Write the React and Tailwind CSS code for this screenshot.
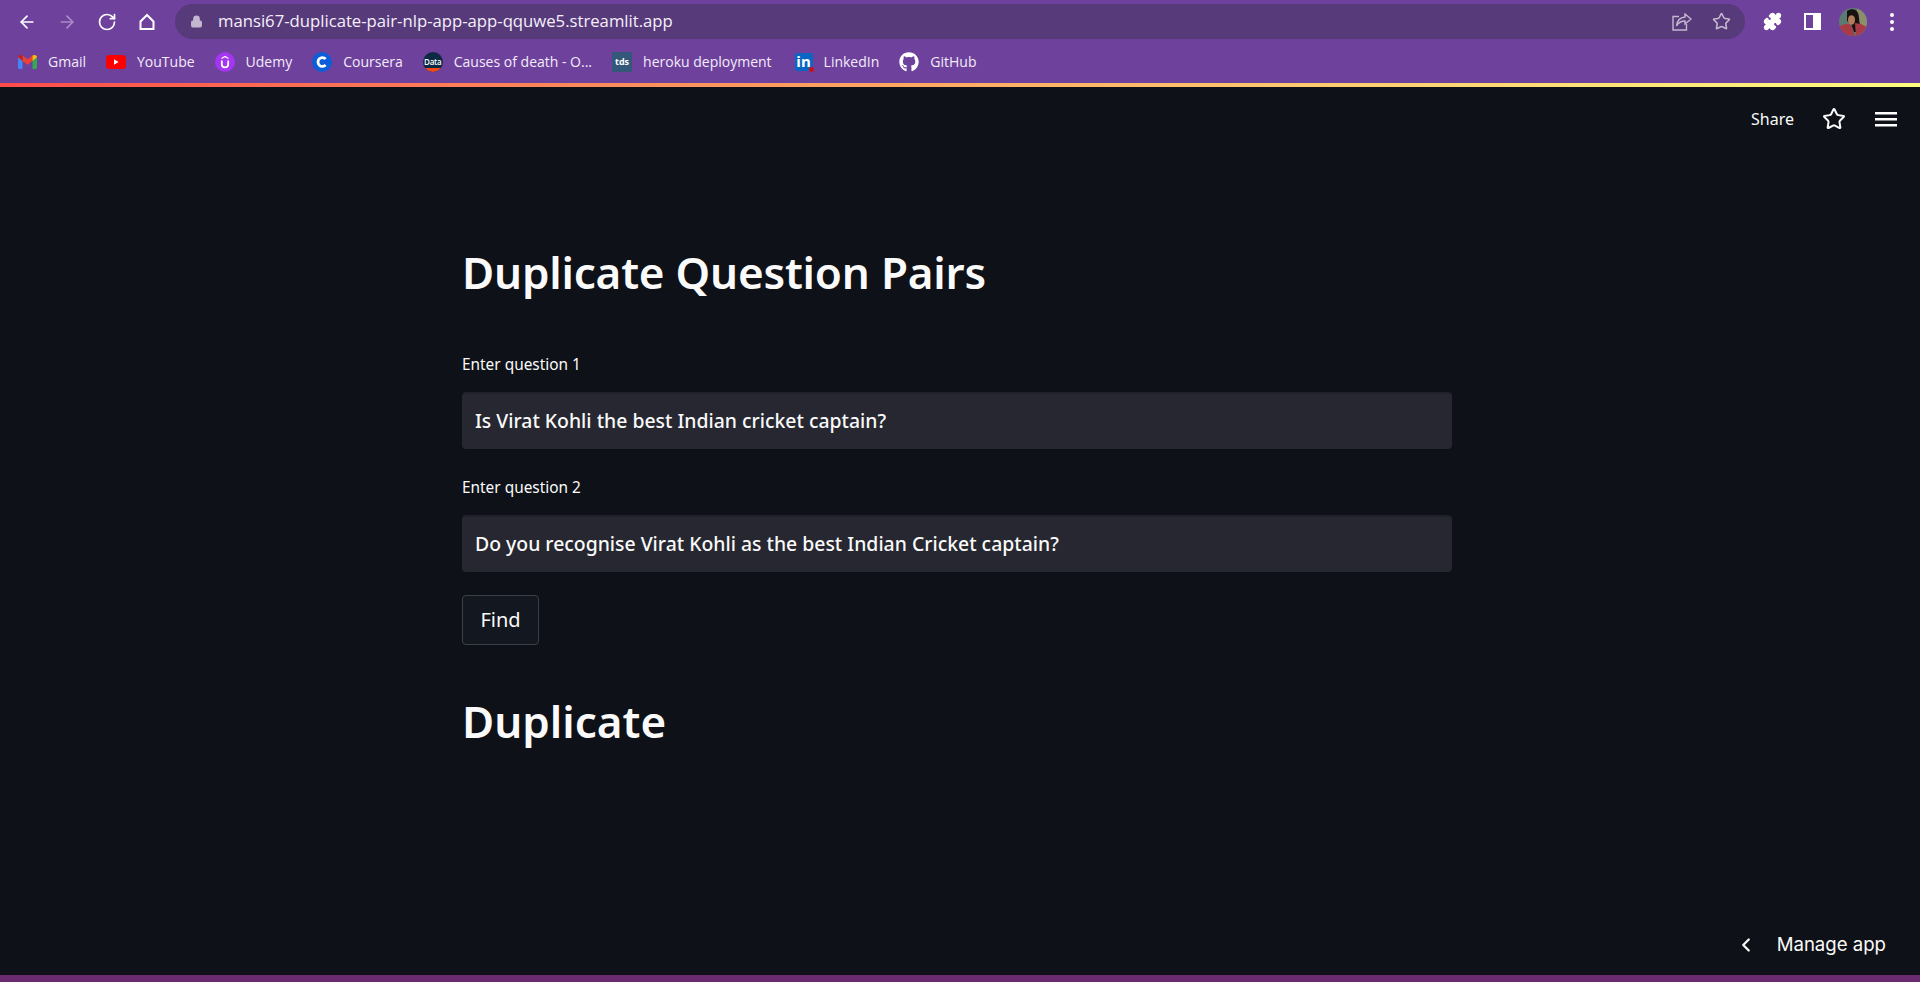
import { ArrowLeft, ArrowRight, RotateCw, Lock, Star, ChevronLeft, Puzzle } from 'lucide-react'
import { FaGithub } from 'react-icons/fa'

const chromeFont = 'font-["Open_Sans","Noto_Sans",sans-serif]'
const appFont = 'font-["Noto_Sans",sans-serif]'

function HomeIcon() {
  return (
    <svg width="20" height="20" viewBox="0 0 20 20" fill="none" stroke="#fff" strokeWidth="2" strokeLinejoin="miter">
      <path d="M10 3 3.500 9.500V17h13V9.500Z" />
    </svg>
  )
}

function MenuIcon() {
  return (
    <svg width="22" height="15" viewBox="0 0 22 15" fill="#fff" className="ml-[29px]">
      <rect width="22" height="2.500" />
      <rect y="6" width="22" height="2.500" />
      <rect y="12" width="22" height="2.500" />
    </svg>
  )
}

function GmailIcon() {
  return (
    <svg width="19" height="15" viewBox="0 0 19 15">
      <path d="M0 3v10.500A1.500 1.500 0 0 0 1.500 15H4.500V6.500Z" fill="#4285f4" />
      <path d="M19 3v10.500a1.500 1.500 0 0 1-1.500 1.500H14.500V6.500Z" fill="#34a853" />
      <path d="M4.500 7 9.500 10.800 14.500 7V1.500L9.500 5.200 4.500 1.500Z" fill="#ea4335" />
      <path d="M0 3.200 C0 1 2.800 .3 4.500 1.500V7Z" fill="#c5221f" />
      <path d="M19 3.200 C19 1 16.200 .3 14.500 1.500V7Z" fill="#fbbc04" />
    </svg>
  )
}

function YoutubeIcon() {
  return (
    <svg width="20" height="14" viewBox="0 0 20 14">
      <rect width="20" height="14" rx="3.500" fill="#f00" />
      <path d="M8 4.200v5.600l4.600-2.800Z" fill="#fff" />
    </svg>
  )
}

function UdemyIcon() {
  return (
    <svg width="20" height="20" viewBox="0 0 20 20">
      <circle cx="10" cy="10" r="10" fill="#a435f0" />
      <path d="M6.500 6.500 10 4.500l3.500 2" fill="none" stroke="#fff" strokeWidth="1.400" />
      <path d="M6.800 8.500v3.700a3.200 3.200 0 0 0 6.400 0V8.500" fill="none" stroke="#fff" strokeWidth="1.800" />
    </svg>
  )
}

function CourseraIcon() {
  return (
    <svg width="20" height="20" viewBox="0 0 20 20">
      <circle cx="10" cy="10" r="10" fill="#0b5ed7" />
      <path d="M13.600 7a4.400 4.400 0 1 0 0 6" fill="none" stroke="#fff" strokeWidth="2.800" />
    </svg>
  )
}

function DataIcon() {
  return (
    <div className="relative flex h-[20px] w-[20px] items-center justify-center overflow-hidden rounded-full bg-[#0d2a45]">
      <span className={`${chromeFont} text-[8px] font-semibold leading-none tracking-[-0.2px] text-white`}>Data</span>
      <span className="absolute bottom-0 left-0 h-[4px] w-full bg-[#f0491c]" />
    </div>
  )
}

function TdsIcon() {
  return (
    <div className="flex h-[20px] w-[20px] items-center justify-center bg-[#34587a]">
      <span className={`${chromeFont} text-[9px] font-bold leading-none text-white`}>tds</span>
    </div>
  )
}

function LinkedinIcon() {
  return (
    <div className="relative flex h-[18px] w-[18px] items-center justify-center rounded-[2px] bg-[#0a66c2]">
      <span className={`${chromeFont} text-[15px] font-bold leading-none text-white`}>in</span>
      <span className="absolute -bottom-[1px] -right-[1px] h-[5px] w-[5px] rounded-full bg-[#cc1016]" />
    </div>
  )
}

function ShareBoxIcon() {
  return (
    <svg width="20" height="18" viewBox="0 0 20 18" fill="none" stroke="#c3b8cf" strokeWidth="1.400">
      <path d="M7 3.500H1v13.500h13.500V11" />
      <path d="M13 1l6 5-6 5V8C9 8 6.500 9.500 4.500 13c.5-5 3.500-8.500 8.500-9Z" />
    </svg>
  )
}

function Avatar() {
  return (
    <svg width="28" height="28" viewBox="0 0 28 28">
      <clipPath id="av"><circle cx="14" cy="14" r="14" /></clipPath>
      <g clipPath="url(#av)">
        <rect width="28" height="28" fill="#5c7a72" />
        <rect x="18" width="10" height="28" fill="#8c8f6c" />
        <path d="M8 3c6-4 12-1 12 7 0 6 3 9 2 14H15l-3-8-4-3Z" fill="#1a1210" />
        <ellipse cx="12.500" cy="12" rx="3.500" ry="4.800" fill="#b67c5c" />
        <path d="M0 19c3-3 8-4 12-2l4 11H0Z" fill="#a93b46" />
        <path d="M16 15l6 1 6 3v9H17Z" fill="#a93b46" />
      </g>
    </svg>
  )
}

const bookmarks = [
  { label: 'Gmail', icon: <GmailIcon /> },
  { label: 'YouTube', icon: <YoutubeIcon /> },
  { label: 'Udemy', icon: <UdemyIcon /> },
  { label: 'Coursera', icon: <CourseraIcon /> },
  { label: 'Causes of death - O...', icon: <DataIcon /> },
  { label: 'heroku deployment', icon: <TdsIcon /> },
  { label: 'LinkedIn', icon: <LinkedinIcon />, extra: 'ml-[3px]' },
  { label: 'GitHub', icon: <FaGithub size={20} color="#fff" /> },
]

function TextField({ label, value }) {
  return (
    <div>
      <p className="mb-[17px] text-[15.400px] leading-[20px] text-[#fafafa]">{label}</p>
      <div className="flex h-[57px] items-center rounded-[4px] border-t-2 border-[#20212a] bg-[#262730] px-[13px] pb-[2px] text-[19.400px] font-medium text-[#fafafa]">
        {value}
      </div>
    </div>
  )
}

export default function App() {
  return (
    <div className="flex h-[982px] flex-col overflow-hidden bg-[#0e1117]">
      <div className={`${chromeFont} bg-[#6e419d] text-white`}>
        <div className="flex h-[42px] items-center pl-[17px] pt-[1px]">
          <div className="flex w-[158px] items-center gap-[20px]">
            <ArrowLeft size={20} strokeWidth={2} />
            <ArrowRight size={20} strokeWidth={2} className="text-[#a88cc6]" />
            <RotateCw size={20} strokeWidth={2} />
            <HomeIcon />
          </div>
          <div className="flex h-[35px] w-[1570px] items-center rounded-full bg-[#573a7a] pl-[15px] pr-[14px]">
            <Lock size={13} fill="#c3b8cf" stroke="#c3b8cf" />
            <span className="ml-[15px] flex-1 text-[16.700px] leading-none text-[#f5f0fa]">
              mansi67-duplicate-pair-nlp-app-app-qquwe5.streamlit.app
            </span>
            <ShareBoxIcon />
            <Star size={19} className="ml-[20px] text-[#c3b8cf]" />
          </div>
          <div className="ml-[18px] flex items-center">
            <Puzzle size={19} fill="#fff" />
            <div className="ml-[22px] flex h-[17px] w-[17px] justify-end border-2 border-white">
              <span className="h-full w-[6px] bg-white" />
            </div>
            <div className="ml-[18px]"><Avatar /></div>
            <div className="ml-[23px] flex flex-col gap-[3px]">
              <span className="h-[4px] w-[4px] rounded-full bg-white" />
              <span className="h-[4px] w-[4px] rounded-full bg-white" />
              <span className="h-[4px] w-[4px] rounded-full bg-white" />
            </div>
          </div>
        </div>
        <div className="flex h-[41px] items-center gap-[20px] pb-[2px] pl-[18px]">
          {bookmarks.map(b => (
            <div key={b.label} className={`flex items-center gap-[11px] ${b.extra || ''}`}>
              {b.icon}
              <span className="text-[14px] leading-none text-[#f3ecf9]">{b.label}</span>
            </div>
          ))}
        </div>
      </div>
      <div className="h-[4px] bg-gradient-to-r from-[#ff4b4b] to-[#fffd80]" />

      <main className={`${appFont} relative flex-1 text-[#fafafa]`}>
        <div className="flex h-[64px] items-center justify-end pr-[23px]">
          <span className="text-[16px]">Share</span>
          <Star size={24} strokeWidth={2} className="ml-[28px]" />
          <MenuIcon />
        </div>
        <div className="ml-[462px] w-[990px] pt-[86px]">
          <h1 className="text-[44px] font-semibold leading-[70px] tracking-[-0.2px]">Duplicate Question Pairs</h1>
          <div className="mt-[48px]"><TextField label="Enter question 1" value="Is Virat Kohli the best Indian cricket captain?" /></div>
          <div className="mt-[29px]"><TextField label="Enter question 2" value="Do you recognise Virat Kohli as the best Indian Cricket captain?" /></div>
          <button className="mt-[23px] h-[50px] w-[77px] rounded-[4px] border border-[#3c3f45] bg-[#13171f] text-[20px]">Find</button>
          <h2 className="mt-[41px] text-[44px] font-semibold leading-[70px]">Duplicate</h2>
        </div>
        <div className="absolute bottom-[16px] right-[34px] flex items-center font-['Inter',sans-serif]">
          <ChevronLeft size={22} strokeWidth={2.500} />
          <span className="ml-[20px] text-[18.600px]">Manage app</span>
        </div>
      </main>
      <div className="h-[7px] bg-[#6a2a70]" />
    </div>
  )
}
